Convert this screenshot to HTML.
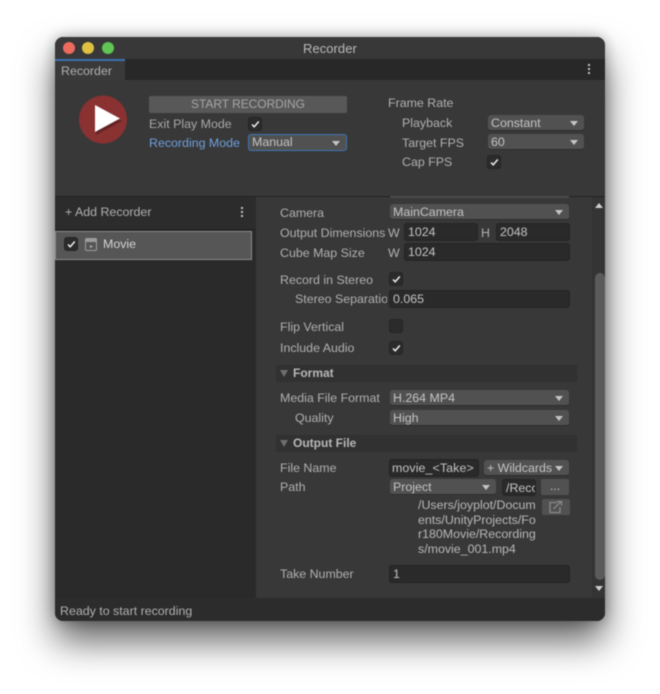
<!DOCTYPE html>
<html><head><meta charset="utf-8">
<style>
html,body{margin:0;padding:0;background:#fff;width:660px;height:694px;overflow:hidden}
#win{position:absolute;left:55px;top:37px;width:550px;height:584px;border-radius:8px;background:#383838;box-shadow:0 20px 36px rgba(0,0,0,.62),0 0 14px rgba(0,0,0,.3);overflow:hidden}
#root{position:absolute;left:0;top:0;width:660px;height:694px;font-family:"Liberation Sans",sans-serif;font-size:12.4px;color:#b0b0b0;filter:blur(.42px)}
.a{position:absolute}
.t{position:absolute;white-space:nowrap;line-height:16px;height:16px}
.dd{position:absolute;background:#515151;border-radius:3px;height:16px;line-height:16px;color:#c4c4c4;padding-left:3px;box-sizing:border-box;border-bottom:1px solid #2c2c2c;white-space:nowrap}
.dd:after{content:"";position:absolute;right:6px;top:6px;border-left:4.5px solid transparent;border-right:4.5px solid transparent;border-top:5px solid #c4c4c4}
.f{position:absolute;background:#2a2a2a;border-radius:3px;height:18px;line-height:17px;color:#c4c4c4;padding-left:3px;box-sizing:border-box;border:1px solid #242424;white-space:nowrap;overflow:hidden}
.c{position:absolute;width:14px;height:14px;background:#2b2b2b;border-radius:3px;border:1px solid #242424;box-sizing:border-box}
.c svg{position:absolute;left:0;top:0}
.h{position:absolute;left:276px;width:301px;height:17px;background:#313131}
.h .tx{position:absolute;left:17px;top:0;line-height:17px;font-weight:bold;color:#b8b8b8;font-size:12px}
.h .tr{position:absolute;left:4px;top:5px;border-left:4.5px solid transparent;border-right:4.5px solid transparent;border-top:7px solid #6e6e6e}
.dot{position:absolute;width:12px;height:12px;border-radius:50%}
.k{position:absolute;width:2px;height:2px;background:#c4c4c4}
</style></head>
<body>
<div id="root">
<div id="win"></div>
<div class="a" style="left:55px;top:37px;width:550px;height:584px;border-radius:8px;overflow:hidden">
  <div class="a" style="left:0;top:0;width:550px;height:22px;background:#383838"></div>
  <div class="a" style="left:0;top:22px;width:550px;height:21px;background:#282828"></div>
  <div class="a" style="left:0;top:22px;width:70px;height:21px;background:#3a3a3a;border-top:2px solid #3a72b0;box-sizing:border-box"></div>
  <div class="a" style="left:0;top:43px;width:550px;height:116px;background:#383838"></div>
  <div class="a" style="left:0;top:159px;width:550px;height:1px;background:#222"></div>
  <div class="a" style="left:0;top:160px;width:201px;height:402px;background:#2a2a2a"></div>
  <div class="a" style="left:0;top:160px;width:201px;height:32px;background:#2c2c2c;border-bottom:1px solid #232323"></div>
  <div class="a" style="left:201px;top:160px;width:349px;height:402px;background:#383838"></div>
  <div class="a" style="left:537px;top:160px;width:13px;height:402px;background:#343434"></div>
  <div class="a" style="left:0;top:561px;width:550px;height:23px;background:#2c2c2c"></div>
</div>

<div class="dot" style="left:63px;top:42px;background:#ec6a5e"></div>
<div class="dot" style="left:82px;top:42px;background:#e0c041"></div>
<div class="dot" style="left:102px;top:42px;background:#61c554"></div>
<div class="t" style="left:303px;top:41px;font-size:13px;color:#b8b8b8;letter-spacing:.05px">Recorder</div>
<div class="t" style="left:61px;top:63px">Recorder</div>
<div class="k" style="left:588px;top:64px"></div><div class="k" style="left:588px;top:68px"></div><div class="k" style="left:588px;top:72px"></div>

<svg class="a" style="left:75px;top:92px" width="56" height="56" viewBox="0 0 56 56">
  <circle cx="28" cy="27.500" r="24" fill="#8a3132"/>
  <path d="M4.500 32a24 24 0 0 0 47 0a24 24 0 0 1-47 0z" fill="#5f2426" opacity=".8"/>
  <path d="M21 16 L47 29 L21 43z" fill="#000" opacity=".28"/>
  <path d="M20 13 L45 26.500 L20 40z" fill="#fff"/>
</svg>

<div class="a" style="left:149px;top:96px;width:198px;height:17px;background:#585858;border-radius:2px;text-align:center;line-height:17px;color:#a6a6a6;font-size:12px;letter-spacing:-.05px">START RECORDING</div>
<div class="t" style="left:149px;top:116px;color:#a8a8a8">Exit Play Mode</div>
<div class="c" style="left:248px;top:117px"><svg width="12" height="12"><path d="M3 6.500 L5.200 8.800 L9.800 3.500" fill="none" stroke="#ededed" stroke-width="1.500"/></svg></div>
<div class="t" style="left:149px;top:135px;color:#6f9fdc">Recording Mode</div>
<div class="dd" style="left:248px;top:134px;width:99px;height:17px;border:1px solid #3f74b3;border-radius:3px;padding-left:3px;line-height:15px">Manual</div>

<div class="t" style="left:388px;top:95px">Frame Rate</div>
<div class="t" style="left:402px;top:115px">Playback</div>
<div class="t" style="left:402px;top:135px">Target FPS</div>
<div class="t" style="left:402px;top:154px">Cap FPS</div>
<div class="dd" style="left:488px;top:115px;width:96px">Constant</div>
<div class="dd" style="left:488px;top:134px;width:96px">60</div>
<div class="c" style="left:487px;top:155px"><svg width="12" height="12"><path d="M3 6.500 L5.200 8.800 L9.800 3.500" fill="none" stroke="#ededed" stroke-width="1.500"/></svg></div>

<div class="t" style="left:65px;top:204px">+ Add Recorder</div>
<div class="k" style="left:241px;top:207px"></div><div class="k" style="left:241px;top:211px"></div><div class="k" style="left:241px;top:215px"></div>
<div class="a" style="left:55px;top:231px;width:197px;height:29px;background:#565656;border:1px solid #8a8a8a;box-sizing:border-box"></div>
<div class="c" style="left:64px;top:237px"><svg width="12" height="12"><path d="M3 6.500 L5.200 8.800 L9.800 3.500" fill="none" stroke="#ededed" stroke-width="1.500"/></svg></div>
<svg class="a" style="left:85px;top:238px" width="12" height="13" viewBox="0 0 12 13"><rect x=".5" y=".5" width="11" height="12" rx="1" fill="none" stroke="#9c9c9c"/><rect x="1" y="1" width="10" height="3" fill="#9c9c9c"/><path d="M5 7 L8 8.500 L5 10z" fill="#b0b0b0"/></svg>
<div class="t" style="left:103px;top:236px;color:#d4d4d4">Movie</div>

<div class="a" style="left:390px;top:196px;width:179px;height:2px;background:#4c4c4c;border-radius:0 0 2px 2px"></div>
<div class="t" style="left:280px;top:205px">Camera</div>
<div class="dd" style="left:390px;top:204px;width:179px">MainCamera</div>
<div class="t" style="left:280px;top:225px">Output Dimensions</div>
<div class="t" style="left:388px;top:225px">W</div>
<div class="f" style="left:404px;top:223px;width:74px">1024</div>
<div class="t" style="left:481px;top:225px">H</div>
<div class="f" style="left:496px;top:223px;width:74px">2048</div>
<div class="t" style="left:280px;top:245px">Cube Map Size</div>
<div class="t" style="left:388px;top:245px">W</div>
<div class="f" style="left:404px;top:243px;width:166px">1024</div>

<div class="t" style="left:280px;top:272px">Record in Stereo</div>
<div class="c" style="left:389px;top:272px"><svg width="12" height="12"><path d="M3 6.500 L5.200 8.800 L9.800 3.500" fill="none" stroke="#ededed" stroke-width="1.500"/></svg></div>
<div class="t" style="left:295px;top:291px;width:92px;overflow:hidden">Stereo Separation</div>
<div class="f" style="left:389px;top:290px;width:181px">0.065</div>
<div class="t" style="left:280px;top:319px">Flip Vertical</div>
<div class="c" style="left:389px;top:319px"></div>
<div class="t" style="left:280px;top:340px">Include Audio</div>
<div class="c" style="left:389px;top:341px"><svg width="12" height="12"><path d="M3 6.500 L5.200 8.800 L9.800 3.500" fill="none" stroke="#ededed" stroke-width="1.500"/></svg></div>

<div class="h" style="top:365px"><div class="tr"></div><div class="tx">Format</div></div>
<div class="t" style="left:280px;top:390px">Media File Format</div>
<div class="dd" style="left:390px;top:390px;width:179px">H.264 MP4</div>
<div class="t" style="left:295px;top:410px">Quality</div>
<div class="dd" style="left:390px;top:410px;width:179px">High</div>

<div class="h" style="top:435px"><div class="tr"></div><div class="tx">Output File</div></div>
<div class="t" style="left:280px;top:460px">File Name</div>
<div class="f" style="left:389px;top:459px;width:90px;padding-left:2px;letter-spacing:.1px">movie_&lt;Take&gt;</div>
<div class="dd" style="left:484px;top:460px;width:85px">+ Wildcards</div>
<div class="t" style="left:280px;top:479px">Path</div>
<div class="dd" style="left:390px;top:479px;width:106px">Project</div>
<div class="f" style="left:502px;top:479px;width:34px;height:17px;line-height:16px">/Recordings</div>
<div class="a" style="left:541px;top:479px;width:28px;height:16px;background:#515151;border-radius:2px;text-align:center;line-height:15px;color:#c4c4c4">...</div>
<div class="a" style="left:542px;top:499px;width:28px;height:16px;background:#515151;border-radius:2px"></div>
<svg class="a" style="left:548px;top:500px" width="16" height="14" viewBox="0 0 16 14"><path d="M9 2.500H2V12.500H12V7" fill="none" stroke="#8a8a8a" stroke-width="1.300"/><path d="M5.500 9 L12.500 2M9 1.500H13.500V5.500" fill="none" stroke="#8a8a8a" stroke-width="1.300"/></svg>
<div class="a" style="left:418px;top:498px;line-height:14.500px;color:#b8b8b8;white-space:nowrap">/Users/joyplot/Docum<br>ents/UnityProjects/Fo<br>r180Movie/Recording<br>s/movie_001.mp4</div>
<div class="t" style="left:280px;top:566px">Take Number</div>
<div class="f" style="left:389px;top:565px;width:181px">1</div>

<div class="a" style="left:595px;top:203px;border-left:4px solid transparent;border-right:4px solid transparent;border-bottom:5px solid #cfcfcf"></div>
<div class="a" style="left:595px;top:273px;width:10px;height:307px;background:#5b5b5b;border-radius:5px"></div>
<div class="a" style="left:595px;top:586px;border-left:4px solid transparent;border-right:4px solid transparent;border-top:5px solid #cfcfcf"></div>

<div class="t" style="left:60px;top:603px">Ready to start recording</div>
</div>
</body></html>
